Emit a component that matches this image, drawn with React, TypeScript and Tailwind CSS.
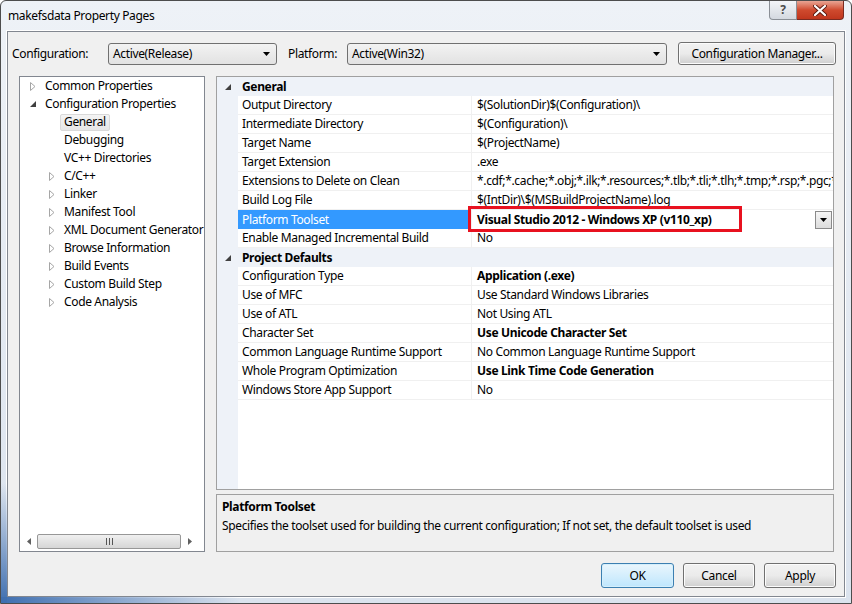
import React from 'react'

const font = { fontFamily: '"Noto Sans", "Open Sans", sans-serif', letterSpacing: '-0.35px' }

type TreeItem = { label: string; level: 0 | 1; arrow: 'none' | 'closed' | 'open'; selected?: boolean }

const treeItems: TreeItem[] = [
  { label: 'Common Properties', level: 0, arrow: 'closed' },
  { label: 'Configuration Properties', level: 0, arrow: 'open' },
  { label: 'General', level: 1, arrow: 'none', selected: true },
  { label: 'Debugging', level: 1, arrow: 'none' },
  { label: 'VC++ Directories', level: 1, arrow: 'none' },
  { label: 'C/C++', level: 1, arrow: 'closed' },
  { label: 'Linker', level: 1, arrow: 'closed' },
  { label: 'Manifest Tool', level: 1, arrow: 'closed' },
  { label: 'XML Document Generator', level: 1, arrow: 'closed' },
  { label: 'Browse Information', level: 1, arrow: 'closed' },
  { label: 'Build Events', level: 1, arrow: 'closed' },
  { label: 'Custom Build Step', level: 1, arrow: 'closed' },
  { label: 'Code Analysis', level: 1, arrow: 'closed' },
]

type Row =
  | { kind: 'cat'; label: string }
  | { kind: 'prop'; name: string; value: string; bold?: boolean; selected?: boolean }

const rows: Row[] = [
  { kind: 'cat', label: 'General' },
  { kind: 'prop', name: 'Output Directory', value: '$(SolutionDir)$(Configuration)\\' },
  { kind: 'prop', name: 'Intermediate Directory', value: '$(Configuration)\\' },
  { kind: 'prop', name: 'Target Name', value: '$(ProjectName)' },
  { kind: 'prop', name: 'Target Extension', value: '.exe' },
  {
    kind: 'prop',
    name: 'Extensions to Delete on Clean',
    value: '*.cdf;*.cache;*.obj;*.ilk;*.resources;*.tlb;*.tli;*.tlh;*.tmp;*.rsp;*.pgc;*.pgd;*.meta;$(TargetPath)',
  },
  { kind: 'prop', name: 'Build Log File', value: '$(IntDir)\\$(MSBuildProjectName).log' },
  { kind: 'prop', name: 'Platform Toolset', value: 'Visual Studio 2012 - Windows XP (v110_xp)', bold: true, selected: true },
  { kind: 'prop', name: 'Enable Managed Incremental Build', value: 'No' },
  { kind: 'cat', label: 'Project Defaults' },
  { kind: 'prop', name: 'Configuration Type', value: 'Application (.exe)', bold: true },
  { kind: 'prop', name: 'Use of MFC', value: 'Use Standard Windows Libraries' },
  { kind: 'prop', name: 'Use of ATL', value: 'Not Using ATL' },
  { kind: 'prop', name: 'Character Set', value: 'Use Unicode Character Set', bold: true },
  { kind: 'prop', name: 'Common Language Runtime Support', value: 'No Common Language Runtime Support' },
  { kind: 'prop', name: 'Whole Program Optimization', value: 'Use Link Time Code Generation', bold: true },
  { kind: 'prop', name: 'Windows Store App Support', value: 'No' },
]

const ClosedArrow = () => (
  <svg width="8" height="9" viewBox="0 0 8 9">
    <path d="M1.5 0.5 L6 4.5 L1.5 8.5 Z" fill="none" stroke="#a6a6a6" strokeWidth="1" />
  </svg>
)

const OpenArrow = () => (
  <svg width="8" height="8" viewBox="0 0 8 8">
    <path d="M7 1 L7 7 L1 7 Z" fill="#404040" />
  </svg>
)

const DownArrow = ({ color = '#000' }: { color?: string }) => (
  <svg width="7" height="4" viewBox="0 0 7 4">
    <path d="M0 0 L7 0 L3.5 4 Z" fill={color} />
  </svg>
)

const Combo = ({ text, width }: { text: string; width: string }) => (
  <div
    className={`${width} h-[22px] flex items-center justify-between pl-[4px] pr-[6px] rounded-[3px] border border-[#707070] bg-gradient-to-b from-[#f3f3f3] to-[#e2e2e2] text-[12px] text-black`}
  >
    <span>{text}</span>
    <DownArrow />
  </div>
)

const Button = ({ text, width, primary }: { text: string; width: string; primary?: boolean }) => (
  <div
    className={`${width} h-[25px] flex items-center justify-center rounded-[3px] border text-[12px] text-black ${
      primary
        ? 'border-[#3c7fb1] bg-gradient-to-b from-[#eaf6fd] to-[#bee6fd] shadow-[inset_0_0_0_1px_#d5effc]'
        : 'border-[#707070] bg-gradient-to-b from-[#f2f2f2] via-[#ebebeb] to-[#cfcfcf] shadow-[inset_0_0_0_1px_#fcfcfc]'
    }`}
  >
    {text}
  </div>
)

function Tree() {
  return (
    <div className="w-[186px] h-[476px] border border-[#828790] bg-white flex flex-col">
      <div className="flex-1 overflow-hidden">
        {treeItems.map((item) => (
          <div key={item.label} className="h-[18px] flex items-center whitespace-nowrap text-[12px] text-black">
            <div className={`${item.level === 0 ? 'w-[21px]' : 'w-[40px]'} flex justify-end pr-[4px] shrink-0`}>
              {item.arrow === 'closed' && <ClosedArrow />}
              {item.arrow === 'open' && <OpenArrow />}
            </div>
            <span
              className={`px-[3px] h-[17px] flex items-center leading-none rounded-[2px] ${
                item.selected ? 'bg-gradient-to-b from-[#f4f4f4] to-[#e6e6e6] border border-[#d9d9d9]' : 'border border-transparent'
              }`}
            >
              {item.label}
            </span>
          </div>
        ))}
      </div>
      <div className="h-[17px] mb-[1px] flex items-center px-[4px] gap-[3px]">
        <div className="w-[10px] flex justify-center">
          <svg width="4" height="7" viewBox="0 0 4 7">
            <path d="M4 0 L0 3.5 L4 7 Z" fill="#606060" />
          </svg>
        </div>
        <div className="w-[144px] h-[15px] rounded-[2px] border border-[#979797] bg-gradient-to-b from-[#f0f0f0] to-[#d6d6d6] flex items-center justify-center">
          <div className="flex gap-[2px]">
            <div className="w-[1px] h-[7px] bg-[#555]" />
            <div className="w-[1px] h-[7px] bg-[#555]" />
            <div className="w-[1px] h-[7px] bg-[#555]" />
          </div>
        </div>
        <div className="w-[12px] flex justify-center">
          <svg width="4" height="7" viewBox="0 0 4 7">
            <path d="M0 0 L4 3.5 L0 7 Z" fill="#606060" />
          </svg>
        </div>
      </div>
    </div>
  )
}

function Grid() {
  return (
    <div className="h-[414px] border border-[#a0a0a0] bg-white relative overflow-hidden">
      <div className="absolute left-0 top-0 bottom-0 w-[21px] bg-[#eef2f8]" />
      <div className="relative flex flex-col">
        {rows.map((row, i) => {
          if (row.kind === 'cat') {
            return (
              <div key={i} className="h-[19px] flex items-center bg-[#eef2f8] text-[12px] font-bold text-black">
                <div className="w-[21px] flex justify-center pl-[1px]">
                  <OpenArrow />
                </div>
                <span className="pl-[4px]">{row.label}</span>
              </div>
            )
          }
          return (
            <div key={i} className="h-[19px] flex text-[12px] text-black">
              <div className="w-[21px] shrink-0" />
              <div
                className={`w-[234px] shrink-0 flex items-center pl-[4px] border-r border-[#f0f0f0] ${
                  row.selected ? 'bg-[#3399ff] text-white' : 'border-b'
                }`}
              >
                {row.name}
              </div>
              <div
                className={`flex-1 flex items-center justify-between pl-[5px] whitespace-nowrap overflow-hidden ${
                  row.selected ? '' : 'border-b border-[#f0f0f0]'
                } ${row.bold ? 'font-bold' : ''}`}
              >
                <span>{row.value}</span>
                {row.selected && (
                  <div className="w-[17px] h-[18px] mr-[1px] border border-[#8a8a8a] bg-gradient-to-b from-[#f6f6f6] to-[#dcdcdc] flex items-center justify-center">
                    <DownArrow />
                  </div>
                )}
              </div>
            </div>
          )
        })}
      </div>
      <div className="absolute left-[251px] top-[129px] w-[274px] h-[26px] border-[3px] border-[#e8111f] pointer-events-none" />
    </div>
  )
}

export default function App() {
  return (
    <div
      style={font}
      className="w-[852px] h-[604px] overflow-hidden bg-gradient-to-b from-[#eef2f7] via-[#e4eaf2] to-[#dbe3ee] border border-[#4d4d4d] rounded-t-[6px] flex flex-col relative"
    >
      {/* title bar */}
      <div className="h-[30px] flex items-start justify-between shrink-0">
        <span className="pl-[7px] pt-[6px] text-[12px] text-black">makefsdata Property Pages</span>
        <div className="flex mr-[7px]">
          <div className="w-[28px] h-[19px] rounded-bl-[4px] border border-[#8a8f96] border-t-0 bg-gradient-to-b from-[#f3f5f8] to-[#d4d9e0] flex items-center justify-center text-[12px] font-bold text-[#4a4a4a]">
            ?
          </div>
          <div className="w-[47px] h-[19px] rounded-br-[4px] border border-[#7a2a20] border-t-0 border-l-0 bg-gradient-to-b from-[#e8a493] via-[#cf4a2e] to-[#c0361d] flex items-center justify-center">
            <svg width="14" height="11" viewBox="0 0 14 11">
              <path d="M2 1 L12 10 M12 1 L2 10" stroke="#5a1a10" strokeWidth="4" strokeLinecap="round" />
              <path d="M2 1 L12 10 M12 1 L2 10" stroke="#ffffff" strokeWidth="2.2" strokeLinecap="round" />
            </svg>
          </div>
        </div>
      </div>

      {/* client area */}
      <div className="mx-[6px] h-[566px] border border-[#828790] bg-[#f0f0f0] flex flex-col shadow-[0_0_0_1px_#ffffff]">
        <div className="pt-[10px] pl-[4px] flex items-center text-[12px] text-black">
          <span className="w-[96px]">Configuration:</span>
          <Combo text="Active(Release)" width="w-[169px]" />
          <span className="ml-[11px] w-[59px]">Platform:</span>
          <Combo text="Active(Win32)" width="w-[320px]" />
          <div className="ml-[11px] w-[158px] h-[23px] flex items-center justify-center rounded-[3px] border border-[#707070] bg-gradient-to-b from-[#f2f2f2] via-[#ebebeb] to-[#cfcfcf] shadow-[inset_0_0_0_1px_#fcfcfc]">
            Configuration Manager...
          </div>
        </div>

        <div className="mt-[11px] pl-[11px] flex gap-[11px]">
          <Tree />
          <div className="w-[618px] flex flex-col gap-[4px]">
            <Grid />
            <div className="h-[58px] border border-[#a0a0a0] bg-[#f0f0f0] px-[5px] pt-[3px] text-[12px] text-black">
              <div className="font-bold">Platform Toolset</div>
              <div className="mt-[1px]">
                Specifies the toolset used for building the current configuration; If not set, the default toolset is used
              </div>
            </div>
          </div>
        </div>

        <div className="mt-[11px] flex justify-end gap-[9px] pr-[8px]">
          <Button text="OK" width="w-[73px]" primary />
          <Button text="Cancel" width="w-[72px]" />
          <Button text="Apply" width="w-[72px]" />
        </div>
      </div>

      <div className="absolute left-0 bottom-0 w-[6px] h-[120px] bg-gradient-to-t from-[#3f6fb0] to-transparent" />
      <div className="absolute left-0 bottom-0 h-[6px] w-[240px] bg-gradient-to-r from-[#3f6fb0] to-transparent" />
    </div>
  )
}
